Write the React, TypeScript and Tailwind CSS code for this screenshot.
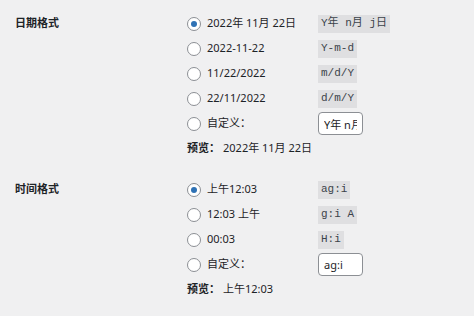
import React from 'react';

type Opt = { label: string; code?: string; custom?: string; checked?: boolean };

const Radio: React.FC<{ checked?: boolean }> = ({ checked }) => (
  <span className="w-[14px] h-[14px] rounded-full border border-[#8c8f94] bg-white flex items-center justify-center shrink-0">
    {checked && <span className="w-[6px] h-[6px] rounded-full bg-[#2f72b5]" />}
  </span>
);

const Section: React.FC<{ title: string; options: Opt[]; preview: string }> = ({ title, options, preview }) => (
  <div className="flex">
    <div className="w-[187px] pl-[15px] h-[25px] flex items-center text-[11px] font-bold text-[#1d2327]">{title}</div>
    <div className="flex flex-col">
      {options.map((o, i) => (
        <div key={i} className="h-[25px] flex items-center">
          <div className="w-[131px] flex items-center gap-[6px]">
            <Radio checked={o.checked} />
            <span>{o.label}</span>
          </div>
          {o.code && (
            <code className="bg-[#dfdfe1] text-[#3c434a] px-[3px] h-[18px] flex items-center text-[11px] font-['Liberation_Mono','Noto_Sans_CJK_SC',monospace]">
              {o.code}
            </code>
          )}
          {o.custom !== undefined && (
            <input
              readOnly
              value={o.custom}
              className="w-[45px] h-[23px] bg-white border border-[#8c8f94] rounded-[4px] px-[5px] text-[11px] text-[#1d2327] outline-none"
            />
          )}
        </div>
      ))}
      <div className="h-[24px] flex items-center">
        <strong className="font-bold">预览：</strong>
        <span className="ml-[3px]">{preview}</span>
      </div>
    </div>
  </div>
);

export default function App() {
  return (
    <div className="w-[474px] h-[316px] bg-[#f0f0f1] text-[#1d2327] text-[11px] font-['Noto_Sans','Noto_Sans_CJK_SC',sans-serif] pt-[11px] flex flex-col gap-[17px] overflow-hidden">
      <Section
        title="日期格式"
        options={[
          { label: '2022年 11月 22日', code: 'Y年 n月 j日', checked: true },
          { label: '2022-11-22', code: 'Y-m-d' },
          { label: '11/22/2022', code: 'm/d/Y' },
          { label: '22/11/2022', code: 'd/m/Y' },
          { label: '自定义：', custom: 'Y年 n月 j日' },
        ]}
        preview="2022年 11月 22日"
      />
      <Section
        title="时间格式"
        options={[
          { label: '上午12:03', code: 'ag:i', checked: true },
          { label: '12:03 上午', code: 'g:i A' },
          { label: '00:03', code: 'H:i' },
          { label: '自定义：', custom: 'ag:i' },
        ]}
        preview="上午12:03"
      />
    </div>
  );
}
